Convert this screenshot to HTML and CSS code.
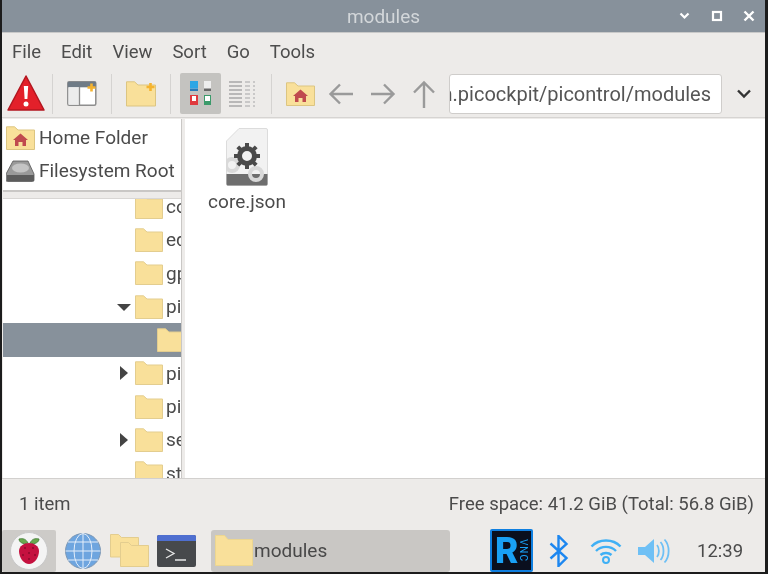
FILE: index.html
```html
<!DOCTYPE html>
<html lang="en">
<head>
<meta charset="utf-8">
<title>modules</title>
<link rel="stylesheet" href="styles.css">
</head>
<body>
<svg class="defs" width="0" height="0" aria-hidden="true">
  <defs>
    <symbol id="folder" viewBox="0 0 28 24">
      <path d="M.5 23.5V.8h8l3.5 3.2h15.5v19.5z" fill="#f9e09a" stroke="#e3cd8f"/>
    </symbol>
    <symbol id="homefolder" viewBox="0 0 29 24">
      <path d="M.5 23.5V.8h8l3.5 3.2h16.500v19.500z" fill="#f9e09a" stroke="#dcc581"/>
      <path d="M14.500 7.500l7.500 6.500h-2v6h-3.500v-4h-4v4H9v-6H7z" fill="#c04a4e"/>
    </symbol>
  </defs>
</svg>
<div class="window">
  <div class="notch"><span class="notch-cell"></span><span class="notch-cell"></span></div>
  <header class="titlebar">
    <span class="title">modules</span>
    <div class="controls">
      <svg width="13" height="10" viewBox="0 0 13 10"><path d="M2.500 2.500l4 4 4-4" fill="none" stroke="#fff" stroke-width="2.200"/></svg>
      <svg width="12" height="12" viewBox="0 0 12 12"><rect x="2" y="2" width="8" height="8" fill="none" stroke="#fff" stroke-width="2.200"/></svg>
      <svg width="12" height="12" viewBox="0 0 12 12"><path d="M1.500 1.500l9 9m0-9l-9 9" fill="none" stroke="#fff" stroke-width="2.400"/></svg>
    </div>
  </header>
  <nav class="menubar">
    <span>File</span><span>Edit</span><span>View</span><span>Sort</span><span>Go</span><span>Tools</span>
  </nav>
  <div class="toolbar">
    <svg class="tool-warning" width="38" height="37" viewBox="0 0 38 37">
      <path d="M19 1L37 35H1z" fill="#e3202a" stroke="#b3161f" stroke-width="1.500" stroke-linejoin="round"/>
      <path d="M16.800 11h4.400l-.8 13h-2.800z" fill="#fff"/><circle cx="19" cy="29" r="2.500" fill="#fff"/>
    </svg>
    <i class="sep"></i>
    <svg class="tool" width="30" height="26" viewBox="0 0 30 26">
      <rect x=".8" y=".8" width="28" height="23.500" rx="1.500" fill="#fff" stroke="#8e8e8e" stroke-width="1.500"/>
      <rect x=".8" y=".8" width="28" height="5.500" fill="#6f7b86"/>
      <rect x="1.500" y="6.300" width="11" height="17.500" fill="#ececec"/>
      <path d="M12.500 6v18" stroke="#8e8e8e" stroke-width="1.300"/>
      <path d="M24.500 2.500v8m-4-4h8" stroke="#f5b32f" stroke-width="2.600"/>
    </svg>
    <i class="sep"></i>
    <svg class="tool" width="30" height="26" viewBox="0 0 30 26">
      <path d="M.5 25V.8h8l3.500 3.200h17.500v21z" fill="#f9e09a" stroke="#dcc581"/>
      <path d="M24.500 2v8m-4-4h8" stroke="#f5b32f" stroke-width="2.600"/>
    </svg>
    <i class="sep"></i>
    <span class="toggle">
      <svg width="24" height="25" viewBox="0 0 24 25">
        <rect x="1" y="0" width="8" height="10" fill="#fff"/><rect x="1" y="0" width="8" height="7.500" fill="#2da6e5"/><rect x="1" y="7.500" width="8" height="2.500" fill="#2979b5"/>
        <rect x="15" y="0" width="7" height="10" fill="#eee"/><rect x="15" y="7.500" width="7" height="2.500" fill="#666"/>
        <rect x="1" y="14" width="8" height="10" fill="#e03a3e"/><rect x="3" y="15" width="4" height="5" fill="#fff"/>
        <rect x="15" y="14" width="7" height="10" fill="#3b9a6a"/><rect x="16" y="15" width="5" height="5" fill="#fff"/>
      </svg>
    </span>
    <svg class="tool" width="28" height="28" viewBox="0 0 28 28">
      <path d="M1 2h13M1 6h13M1 10h13M1 14h13M1 18h13M1 22h13M1 26h13" stroke="#a8a8a8" stroke-width="1.300"/>
      <path d="M17 2h5M17 6h5M17 10h5M17 14h5M17 18h5M17 22h5M17 26h5M25 2h2M25 6h2M25 10h2M25 14h2M25 18h2M25 22h2M25 26h2" stroke="#bdbdbd" stroke-width="1.300"/>
    </svg>
    <i class="sep"></i>
    <svg class="tool" width="29" height="24" viewBox="0 0 29 24"><use href="#homefolder"/></svg>
    <svg class="nav-arrow" width="26" height="24" viewBox="0 0 26 24"><path d="M25 12H3m9-9.500L2.500 12l9.500 9.500" fill="none" stroke="#9a9a9a" stroke-width="2.400"/></svg>
    <svg class="nav-arrow" width="26" height="24" viewBox="0 0 26 24"><path d="M1 12h22M14 2.500l9.500 9.500-9.500 9.500" fill="none" stroke="#9a9a9a" stroke-width="2.400"/></svg>
    <svg class="nav-arrow" width="24" height="28" viewBox="0 0 24 28"><path d="M12 28V3M2 12.500L12 2.500l10 10" fill="none" stroke="#9a9a9a" stroke-width="2.400"/></svg>
    <div class="pathbox"><span>/home/pi/.local/share/com.picockpit/picontrol/modules</span></div>
    <svg class="dropdown" width="16" height="10" viewBox="0 0 16 10"><path d="M2 1.500l6 6 6-6" fill="none" stroke="#333" stroke-width="2.400"/></svg>
  </div>
  <div class="panes">
    <aside class="sidebar">
      <div class="places">
        <div class="place"><svg width="29" height="24" viewBox="0 0 29 24"><use href="#homefolder"/></svg><span>Home Folder</span></div>
        <div class="place">
          <svg width="29" height="22" viewBox="0 0 29 22">
            <path d="M7 1h15l6 13v6a1.500 1.500 0 0 1-1.500 1.500h-25A1.500 1.500 0 0 1 0 20v-6z" fill="#9a9a9a" stroke="#555" stroke-width=".8"/>
            <ellipse cx="14.500" cy="8" rx="8.500" ry="4.500" fill="#c4c4c4"/>
            <rect x="1" y="15" width="27" height="6" fill="#5c5c5c"/>
          </svg>
          <span>Filesystem Root</span>
        </div>
      </div>
      <div class="tree">
        <ul class="tree-list">
          <li class="row"><svg class="fld" width="28" height="24"><use href="#folder"/></svg><span>core</span></li>
          <li class="row"><svg class="fld" width="28" height="24"><use href="#folder"/></svg><span>edit</span></li>
          <li class="row"><svg class="fld" width="28" height="24"><use href="#folder"/></svg><span>gpio</span></li>
          <li class="row"><svg class="arrow" width="16" height="10" viewBox="0 0 16 10"><path d="M1 2h14L8 9z" fill="#444"/></svg><svg class="fld" width="28" height="24"><use href="#folder"/></svg><span>picontrol</span></li>
          <li class="row selected"><svg class="fld" width="28" height="24"><use href="#folder"/></svg></li>
          <li class="row"><svg class="arrow" width="16" height="14" viewBox="0 0 16 14"><path d="M4 0l8 7-8 7z" fill="#444"/></svg><svg class="fld" width="28" height="24"><use href="#folder"/></svg><span>pistats</span></li>
          <li class="row"><svg class="fld" width="28" height="24"><use href="#folder"/></svg><span>pipower</span></li>
          <li class="row"><svg class="arrow" width="16" height="14" viewBox="0 0 16 14"><path d="M4 0l8 7-8 7z" fill="#444"/></svg><svg class="fld" width="28" height="24"><use href="#folder"/></svg><span>services</span></li>
          <li class="row"><svg class="fld" width="28" height="24"><use href="#folder"/></svg><span>stats</span></li>
        </ul>
      </div>
    </aside>
    <main class="files">
      <figure class="file">
        <svg width="42" height="58" viewBox="0 0 42 58">
          <path d="M13 .5h27a1.500 1.500 0 0 1 1.500 1.500v54a1.500 1.500 0 0 1-1.500 1.500H2A1.500 1.500 0 0 1 .5 56V13z" fill="#f2f2f2" stroke="#dcdcdc"/>
          <path d="M.5 46h41v10a1.500 1.500 0 0 1-1.500 1.500H2A1.500 1.500 0 0 1 .5 56z" fill="#6e6e6e"/>
          <circle cx="6" cy="37" r="6" fill="none" stroke="#d9d9d9" stroke-width="4"/>
          <circle cx="30" cy="46" r="6" fill="none" stroke="#d9d9d9" stroke-width="4"/>
          <circle cx="21" cy="28" r="7.500" fill="none" stroke="#4a4a4a" stroke-width="5"/>
          <path d="M21 15v26M8 28h26M11.800 18.800l18.400 18.400M30.200 18.800L11.800 37.200" stroke="#4a4a4a" stroke-width="4" stroke-dasharray="4 18"/>
        </svg>
        <figcaption>core.json</figcaption>
      </figure>
    </main>
  </div>
  <footer class="statusbar">
    <span>1 item</span>
    <span>Free space: 41.2 GiB (Total: 56.8 GiB)</span>
  </footer>
  <div class="panel">
    <div class="launchers">
      <span class="menu-btn">
        <svg width="38" height="38" viewBox="0 0 38 38">
          <circle cx="19" cy="19" r="18.500" fill="#f4f4f4" stroke="#c9c9c9"/>
          <path d="M18 11c-2-4-5-5-9-4 0 3 4 6 9 4zM20 11c2-4 5-5 9-4 0 3-4 6-9 4z" fill="#6aa84f" stroke="#3f7a33" stroke-width=".8"/>
          <path d="M19 11c5 0 10 3 10 8 0 7-5 13-10 13S9 26 9 19c0-5 5-8 10-8z" fill="#c5113f"/>
          <g fill="#8c0a2c"><circle cx="15" cy="16" r="1"/><circle cx="23" cy="16" r="1"/><circle cx="19" cy="21" r="1"/><circle cx="13" cy="23" r="1"/><circle cx="25" cy="23" r="1"/><circle cx="19" cy="27" r="1"/></g>
        </svg>
      </span>
      <svg width="36" height="36" viewBox="0 0 36 36" class="globe">
        <circle cx="18" cy="18" r="17.500" fill="#6ea5df" stroke="#7d97b3"/>
        <path d="M18 .5v35M.5 18h35M3 9h30M3 27h30" stroke="#e4eefa" stroke-width="1"/>
        <ellipse cx="18" cy="18" rx="9" ry="17.500" fill="none" stroke="#e4eefa"/>
      </svg>
      <svg width="39" height="33" viewBox="0 0 39 33" class="folders">
        <path d="M.5 23V.5h8l3 3h17v19.500z" fill="#f9e09a" stroke="#e3cd8f"/>
        <path d="M10.500 32.500V8.500h8l3 3h17v21z" fill="#f9e09a" stroke="#e3cd8f"/>
      </svg>
      <svg width="39" height="32" viewBox="0 0 39 32" class="terminal">
        <rect width="39" height="32" rx="2" fill="#47494c"/>
        <path d="M0 2a2 2 0 0 1 2-2h35a2 2 0 0 1 2 2v4H0z" fill="#4f6fd0"/>
        <path d="M9 14l8 4.500-8 4.500M18 25h11" fill="none" stroke="#e8e8e8" stroke-width="1.300"/>
      </svg>
    </div>
    <div class="task">
      <svg width="38" height="31" viewBox="0 0 38 31"><path d="M.5 30.500V.5h9l3.500 4h24.500v26z" fill="#f9e09a" stroke="#ecd68f"/></svg>
      <span>modules</span>
    </div>
    <div class="tray">
      <span class="vnc">
        <span class="vnc-r">R</span><span class="vnc-t">VNC</span>
      </span>
      <svg width="20" height="32" viewBox="0 0 20 32" class="bt"><path d="M1.500 8.500l16 14.500-8 8V1l8 8-16 14.500" fill="none" stroke="#1d87f0" stroke-width="2.400"/></svg>
      <svg width="32" height="27" viewBox="0 0 32 27" class="wifi">
        <path d="M1.500 9.500C9 1.500 23 1.500 30.500 9.500M6 14c5.500-5.500 14.500-5.500 20 0M10.500 18c3-2.700 8-2.700 11 0" fill="none" stroke="#3fb0f5" stroke-width="2.400"/>
        <circle cx="16" cy="23" r="3" fill="none" stroke="#3fb0f5" stroke-width="2"/>
      </svg>
      <svg width="32" height="26" viewBox="0 0 32 26" class="vol">
        <path d="M0 9h7l9-8v24l-9-8H0z" fill="#6fc0f5"/>
        <path d="M19 7c2.500 3 2.500 9 0 12M22.500 4c4 4.500 4 13.500 0 18M26.500 1.500c5.500 6 5.500 17 0 23" fill="none" stroke="#6fc0f5" stroke-width="1.800"/>
      </svg>
      <span class="clock">12:39</span>
    </div>
  </div>
</div>
</body>
</html>
```
FILE: styles.css
```css
html, body { margin: 0; padding: 0; }
body {
  width: 768px;
  height: 574px;
  overflow: hidden;
  background: #1c1c1c;
  font-family: Roboto, "Liberation Sans", sans-serif;
  color: #4b4b4b;
}
.defs { position: absolute; }
svg { display: block; flex: none; }
.window {
  position: relative;
  width: 763px;
  height: 572px;
  margin-left: 2px;
  display: flex;
  flex-direction: column;
  background: #edebe9;
  filter: blur(0.45px);
}
.notch {
  position: absolute;
  left: 239px;
  top: 0;
  width: 285px;
  height: 2px;
  display: flex;
  background: #fff;
  border: solid #222;
  border-width: 0 1px 1px;
  box-sizing: border-box;
}
.notch-cell { flex: none; width: 198px; height: 1px; border-right: 1px solid #888; }
.titlebar {
  height: 32px;
  flex: none;
  background: #87919b;
  position: relative;
  display: flex;
  align-items: center;
  justify-content: center;
  border-bottom: 1px solid #c9c9c9;
}
.title { color: #d3d7da; font-size: 19px; padding-top: 1px; }
.controls {
  position: absolute;
  right: 10px;
  top: 10px;
  display: flex;
  align-items: center;
  gap: 20px;
}
.menubar {
  height: 37px;
  flex: none;
  display: flex;
  align-items: center;
  gap: 20px;
  padding-left: 10px;
  font-size: 18.500px;
  color: #4d4d4d;
}
.toolbar {
  height: 48px;
  flex: none;
  display: flex;
  align-items: center;
  padding-left: 5px;
  box-sizing: border-box;
  border-bottom: 1px solid #d6d4d2;
}
.tool-warning { margin-right: 7px; }
.sep { flex: none; width: 1px; height: 40px; background: #d5d3d1; }
.tool { margin: 0 14px; }
.toggle {
  flex: none;
  width: 41px;
  height: 41px;
  margin-left: 9px;
  display: flex;
  align-items: center;
  justify-content: center;
  background: #c4c3c0;
  border-radius: 2px;
}
.toggle + .tool { margin: 0 15px 0 7px; }
.nav-arrow { margin-right: 16px; }
.nav-arrow:nth-of-type(1) { margin-left: 0; }
.tool + .nav-arrow { margin-left: -1px; }
.pathbox {
  width: 273px;
  height: 40px;
  flex: none;
  box-sizing: border-box;
  margin-left: -3px;
  background: #fff;
  border: 1px solid #cfcdcb;
  border-radius: 3px;
  overflow: hidden;
  display: flex;
  align-items: center;
  justify-content: flex-end;
  padding-right: 10px;
  font-size: 20px;
  white-space: nowrap;
  color: #555;
}
.pathbox span { flex: none; }
.dropdown { margin-left: 14px; }
.panes {
  height: 359px;
  flex: none;
  display: flex;
  border-top: 1px solid #edebe9;
  border-bottom: 1px solid #d2d0ce;
  box-sizing: content-box;
}
.sidebar {
  width: 178px;
  flex: none;
  display: flex;
  flex-direction: column;
  border-right: 1px solid #c9c7c5;
  margin-left: 1px;
}
.places {
  height: 69px;
  flex: none;
  background: #fff;
  border-bottom: 2px solid #c9c7c5;
  padding-top: 2px;
  box-sizing: content-box;
  font-size: 19px;
}
.place {
  height: 33px;
  display: flex;
  align-items: center;
  gap: 4px;
  padding-left: 3px;
  white-space: nowrap;
}
.tree {
  flex: 1;
  min-height: 0;
  margin-top: 6px;
  background: #fff;
  overflow: hidden;
  border-top: 1px solid #d8d6d4;
}
.tree-list {
  margin: -9px 0 0;
  padding: 0;
  list-style: none;
  font-size: 19px;
}
.row {
  height: 33.330px;
  position: relative;
  display: flex;
  align-items: center;
  padding-left: 132px;
  white-space: nowrap;
  overflow: hidden;
}
.row span { margin-left: 3px; }
.row.selected { background: #87919b; padding-left: 154px; }
.arrow { position: absolute; left: 113px; top: 50%; transform: translateY(-50%); }
.files {
  flex: 1;
  margin-left: 3px;
  background: #fff;
  padding: 9px 0 0 24px;
}
.file {
  margin: 0;
  width: 76px;
  display: flex;
  flex-direction: column;
  align-items: center;
}
.file svg { width: 42px; height: 58px; }
.file figcaption { font-size: 19px; line-height: 22px; margin-top: 5px; white-space: nowrap; }
.statusbar {
  height: 50px;
  flex: none;
  display: flex;
  align-items: center;
  justify-content: space-between;
  padding: 0 11px 0 17px;
  font-size: 18.500px;
  box-sizing: border-box;
}
.panel {
  height: 43px;
  flex: none;
  display: flex;
  align-items: center;
  font-size: 19px;
}
.launchers { display: flex; align-items: center; height: 43px; width: 207px; flex: none; }
.menu-btn {
  width: 54px;
  height: 42px;
  flex: none;
  background: #cdcbc8;
  border-radius: 2px;
  display: flex;
  align-items: center;
  justify-content: center;
  margin-right: 9px;
}
.globe { margin-right: 9px; }
.folders { margin-right: 8px; }
.task {
  width: 239px;
  height: 42px;
  flex: none;
  background: #c9c7c4;
  border-radius: 3px;
  margin-left: 2px;
  display: flex;
  align-items: center;
  gap: 1px;
  padding-left: 4px;
  box-sizing: border-box;
  color: #484848;
}
.tray { flex: 1; display: flex; align-items: center; padding-left: 40px; }
.vnc {
  width: 43px;
  height: 43px;
  flex: none;
  box-sizing: border-box;
  background: #0a0f1e;
  border: 2px solid #0f7fe0;
  border-radius: 2px;
  display: flex;
  align-items: center;
  justify-content: space-between;
  padding: 0 3px;
  color: #19a0f5;
  overflow: hidden;
}
.vnc-r { font-size: 36px; font-weight: 900; line-height: 1; }
.vnc-t { writing-mode: vertical-rl; font-size: 10px; letter-spacing: 1px; }
.bt { margin-left: 16px; }
.wifi { margin-left: 21px; }
.vol { margin-left: 16px; }
.clock { margin-left: 27px; font-size: 18.500px; }
```
